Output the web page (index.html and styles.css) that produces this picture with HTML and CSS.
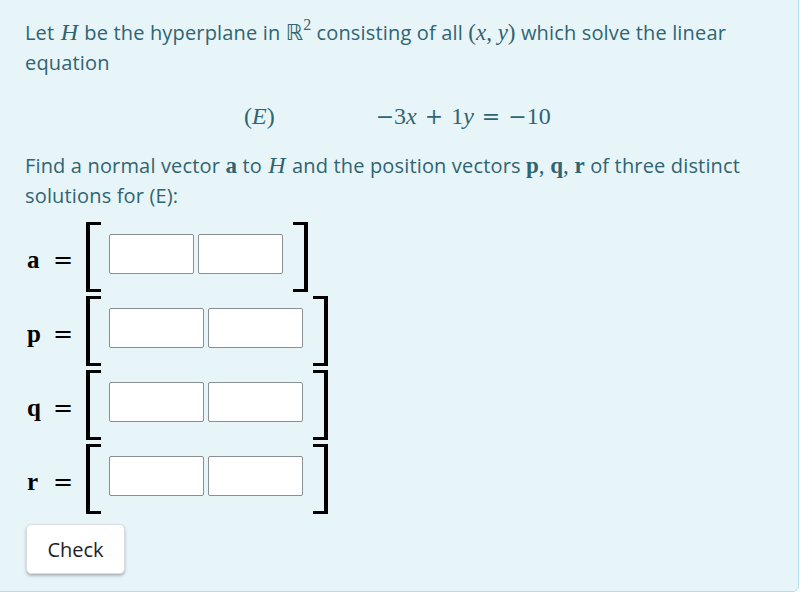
FILE: index.html
```html
<!DOCTYPE html>
<html lang="en">
<head>
<meta charset="utf-8">
<title>Hyperplane</title>
<link rel="stylesheet" href="styles.css">
</head>
<body>
<div class="box">
  <p class="txt">Let <i class="mi">H</i> be the hyperplane in <span class="ds">ℝ<sup class="sup">2</sup></span> consisting of all <span class="mth">(<i>x</i>, <i>y</i>)</span> which solve the linear equation</p>
  <div class="disp">
    <span class="tag">(<i>E</i>)</span>
    <span class="eq"><span class="opn">−</span>3<i>x</i><span class="op">+</span>1<i>y</i><span class="op">=</span><span class="opn">−</span>10</span>
  </div>
  <p class="txt">Find a normal vector <b class="mb">a</b> to <i class="mi">H</i> and the position vectors <span class="mth"><b class="mb">p</b>, <b class="mb">q</b>, <b class="mb">r</b></span> of three distinct solutions for (E):</p>
  <div class="mats">
    <div class="row">
      <span class="lbl"><b class="lv">a</b><span class="leq">=</span></span>
      <span class="brk l"></span>
      <span class="cells"><input class="cell narrow" type="text"><input class="cell narrow" type="text"></span>
      <span class="brk r"></span>
    </div>
    <div class="row">
      <span class="lbl"><b class="lv">p</b><span class="leq">=</span></span>
      <span class="brk l"></span>
      <span class="cells"><input class="cell" type="text"><input class="cell" type="text"></span>
      <span class="brk r"></span>
    </div>
    <div class="row">
      <span class="lbl"><b class="lv">q</b><span class="leq">=</span></span>
      <span class="brk l"></span>
      <span class="cells"><input class="cell" type="text"><input class="cell" type="text"></span>
      <span class="brk r"></span>
    </div>
    <div class="row">
      <span class="lbl"><b class="lv">r</b><span class="leq">=</span></span>
      <span class="brk l"></span>
      <span class="cells"><input class="cell" type="text"><input class="cell" type="text"></span>
      <span class="brk r"></span>
    </div>
  </div>
  <button class="check" type="button">Check</button>
</div>
</body>
</html>
```
FILE: styles.css
```css
html, body {
  margin: 0;
  height: 100%;
  overflow: hidden;
}
body {
  background: #ffffff;
  font-family: "Open Sans", "Noto Sans", sans-serif;
}
.box {
  margin: -20px 6px 0 -20px;
  height: 612px;
  box-sizing: border-box;
  border: 1px solid #b0e1e9;
  border-radius: 6px;
  background: #e8f5f8;
  padding: 36px 20px 0 44px;
  color: #2f6473;
}
.txt {
  margin: 0;
  font-size: 20px;
  line-height: 30px;
  letter-spacing: 0.16px;
}
.txt + .disp { margin-top: 18px; }
.disp + .txt { margin-top: 14px; }
.mi, .mth, .tag, .eq {
  font-family: "Liberation Serif", serif;
  letter-spacing: 0;
}
.mi {
  font-size: 24px;
  padding: 0 1px;
}
.mth {
  font-size: 23px;
}
.mb {
  font-family: "Liberation Serif", serif;
  font-style: normal;
  font-weight: bold;
  font-size: 23px;
}
.ds {
  font-family: "DejaVu Sans", sans-serif;
  font-size: 22px;
  letter-spacing: 0;
}
.sup {
  font-family: "Liberation Serif", serif;
  font-size: 16px;
  vertical-align: 10px;
  line-height: 0;
}
.disp {
  height: 40px;
  display: flex;
  align-items: center;
  padding-left: 219px;
  gap: 101px;
  font-size: 24px;
}
.op {
  font-family: "DejaVu Serif", serif;
  font-size: 22px;
  margin: 0 8px;
}
.opn {
  font-family: "DejaVu Serif", serif;
  font-size: 22px;
}
.mats {
  margin-top: 11px;
  display: flex;
  flex-direction: column;
  gap: 4px;
}
.row {
  display: flex;
  height: 70px;
}
.lbl {
  width: 61px;
  display: flex;
  align-items: center;
  padding-top: 6px;
  box-sizing: border-box;
  color: #000;
}
.lv {
  font-family: "Liberation Serif", serif;
  font-weight: bold;
  font-size: 25px;
  width: 26px;
  padding-left: 2px;
}
.leq {
  font-family: "DejaVu Serif", serif;
  font-size: 24px;
  font-weight: 300;
}
.brk {
  width: 15px;
  box-sizing: border-box;
  border: 0 solid #000;
}
.brk.l { border-width: 3px 0 3px 4px; }
.brk.r { border-width: 3px 4px 3px 0; }
.cells {
  display: flex;
  gap: 4px;
  padding: 12px 10px 18px 8px;
}
.cell {
  width: 95px;
  height: 40px;
  box-sizing: border-box;
  margin: 0;
  border: 1px solid #8a8f94;
  border-radius: 2px;
  background: #fff;
  padding: 0 6px;
  font-family: "Open Sans", sans-serif;
  font-size: 18px;
}
.cell.narrow { width: 85px; }
.check {
  display: block;
  margin: 10px 0 0 1px;
  width: 99px;
  height: 50px;
  box-sizing: border-box;
  border: 1px solid #d8dcdf;
  border-radius: 5px;
  background: #fff;
  box-shadow: 0 2px 3px rgba(0, 0, 0, 0.25);
  font-family: "Open Sans", sans-serif;
  font-size: 20px;
  color: #1d2125;
  padding: 0;
}
```
